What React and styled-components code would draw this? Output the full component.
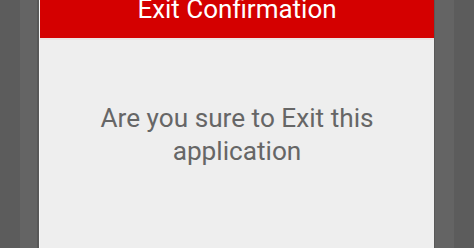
import React from "react";
import styled, { createGlobalStyle } from "styled-components";

const Global = createGlobalStyle`
  html, body { margin: 0; padding: 0; }
  body { width: 474px; height: 248px; overflow: hidden; background: #5e5e5e; font-family: Roboto, "Noto Sans", sans-serif; }
`;

const Screen = styled.div`
  width: 474px;
  height: 248px;
  display: grid;
  grid-template-columns: 20px 17px 2px 395px 1px 19px 1fr;
  background: #5e5e5e;
  overflow: hidden;
`;

const Stripe = styled.div`
  background: ${(p) => p.$c};
`;

const Dialog = styled.div`
  display: flex;
  flex-direction: column;
  background: #eeeeee;
  border-left: 1px solid #f6f6f6;
`;

const Header = styled.div`
  height: 40px;
  background: #d40000;
  color: #ffffff;
  font-size: 26px;
  line-height: 19px;
  text-align: center;
  box-sizing: border-box;
  border-bottom: 2px solid #ece2e2;
`;

const Message = styled.div`
  padding-top: 62px;
  color: #666666;
  font-size: 26.2px;
  line-height: 33px;
  text-align: center;
`;

export default function App() {
  return (
    <>
      <Global />
      <Screen>
        <Stripe $c="#5c5c5c" />
        <Stripe $c="#646464" />
        <Stripe $c="#585858" />
        <Dialog>
          <Header>Exit Confirmation</Header>
          <Message>
            Are you sure to Exit this
            <br />
            application
          </Message>
        </Dialog>
        <Stripe $c="#585858" />
        <Stripe $c="#646464" />
        <Stripe $c="#5c5c5c" />
      </Screen>
    </>
  );
}
